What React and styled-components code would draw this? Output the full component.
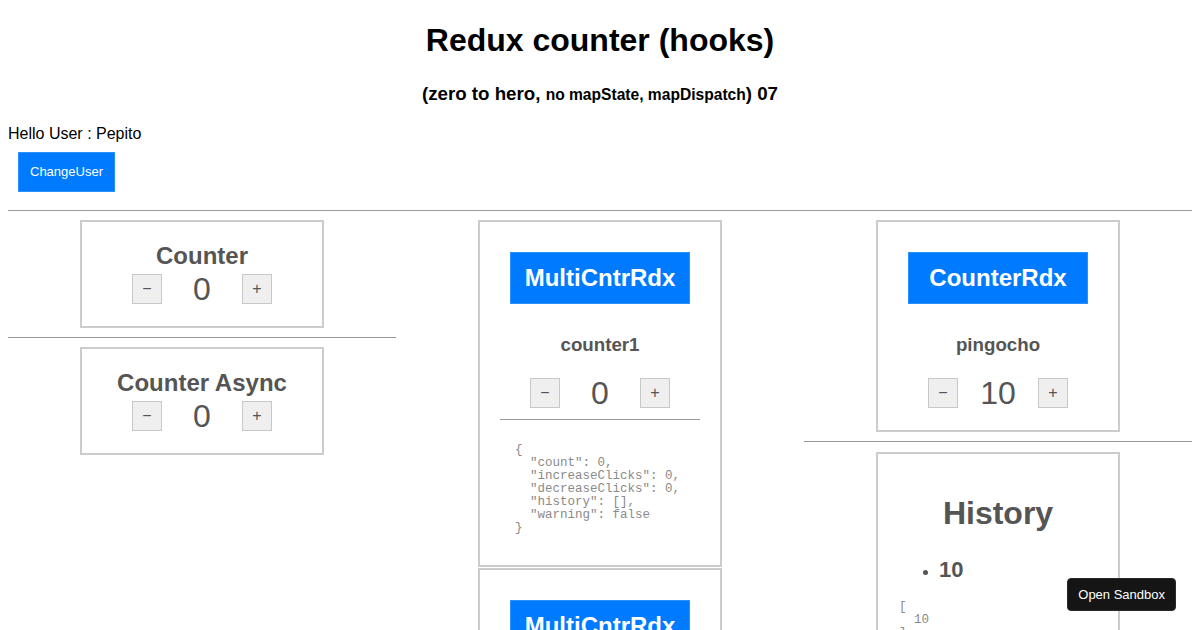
import React from 'react'
import styled, { createGlobalStyle } from 'styled-components'

const GlobalStyle = createGlobalStyle`
  body {
    margin: 8px;
    background: #fff;
    color: #000;
    font-family: "Liberation Sans", Arial, sans-serif;
  }
`

const Header = styled.header`
  text-align: center;
`

const Title = styled.h1`
  margin: 14px 0 0;
  font-size: 32px;
  font-weight: 700;
  line-height: 37px;
`

const Subtitle = styled.h3`
  margin: 24px 0 0;
  font-size: 18.72px;
  font-weight: 700;
  line-height: normal;
  small {
    font-size: 15.6px;
  }
`

const Greeting = styled.div`
  margin-top: 20px;
  font-size: 16px;
  line-height: normal;
`

const BlueButton = styled.button`
  display: block;
  box-sizing: border-box;
  background: #007bff;
  color: #fff;
  border: 1px solid #2b8fff;
  font-family: "Liberation Sans", Arial, sans-serif;
  cursor: pointer;
  ${({ $size }) =>
    $size === 'lg'
      ? `
    width: 180px;
    margin: 10px auto 0;
    padding: 11px 0;
    font-size: 24px;
    font-weight: 700;
    line-height: 27.6px;
  `
      : `
    margin: 9px 0 0 10px;
    padding: 11px 11px;
    font-size: 13px;
    line-height: 15.5px;
  `}
`

const Rule = styled.hr`
  height: 0;
  margin: ${({ $top }) => ($top ? `${$top}px` : '0')} 0 0;
  border: none;
  border-top: 1px solid #9a9a9a;
`

const Columns = styled.div`
  display: grid;
  grid-template-columns: repeat(3, 1fr);
  column-gap: 10px;
  align-items: start;
`

const Column = styled.div`
  display: flex;
  flex-direction: column;
`

const Card = styled.div`
  width: 200px;
  margin: ${({ $top = 9 }) => $top}px auto ${({ $stacked }) => ($stacked ? '1px' : '9px')};
  padding: 20px 20px 22px;
  border: 2px solid #ccc;
  color: #555;
  text-align: center;
  & + & {
    margin-top: 0;
  }
`

const CardTitle = styled.div`
  font-size: 24px;
  font-weight: 700;
  line-height: 28px;
`

const Name = styled.div`
  margin-top: 30px;
  font-size: 18.72px;
  font-weight: 700;
  line-height: 21px;
`

const Stepper = styled.div`
  display: flex;
  align-items: center;
  justify-content: center;
  height: 30px;
  margin-top: ${({ $top }) => $top}px;
`

const StepButton = styled.button`
  width: 30px;
  height: 30px;
  padding: 0;
  background: #efefef;
  border: 1px solid #c8c8c8;
  color: #555;
  font-family: "Liberation Sans", Arial, sans-serif;
  font-size: 16px;
  line-height: 28px;
  cursor: pointer;
`

const Value = styled.span`
  width: 80px;
  font-size: 32px;
  line-height: 30px;
  color: #555;
`

const InnerRule = styled.hr`
  height: 0;
  margin: 11px 0 0;
  border: none;
  border-top: 1px solid #9a9a9a;
`

const Json = styled.pre`
  margin: ${({ $m }) => $m};
  font-family: "Liberation Mono", "Courier New", monospace;
  font-size: 12.5px;
  line-height: 13px;
  color: #8a8a8a;
  text-align: left;
  white-space: pre;
`

const HistoryTitle = styled.h1`
  margin: 21px 0 0;
  font-size: 32px;
  font-weight: 700;
  line-height: 37px;
`

const HistoryList = styled.ul`
  margin: 25px 0 0;
  padding-left: 41px;
  text-align: left;
`

const HistoryItem = styled.li`
  font-size: 22px;
  font-weight: 700;
  line-height: 25px;
  &::marker {
    font-size: 16px;
  }
`

const SandboxLink = styled.a`
  position: fixed;
  right: 24px;
  bottom: 19px;
  padding: 8px 10px;
  background: #151515;
  border: 1px solid #2a2a2a;
  border-radius: 4px;
  color: #fff;
  font-family: "Liberation Sans", Arial, sans-serif;
  font-size: 13px;
  line-height: 15px;
  text-decoration: none;
`

const multiState = `{
  "count": 0,
  "increaseClicks": 0,
  "decreaseClicks": 0,
  "history": [],
  "warning": false
}`

const Counter = ({ title, value }) => (
  <Card>
    <CardTitle>{title}</CardTitle>
    <Stepper $top={4}>
      <StepButton>−</StepButton>
      <Value>{value}</Value>
      <StepButton>+</StepButton>
    </Stepper>
  </Card>
)

const ReduxCounter = ({ label, name, value, state, stacked }) => (
  <Card $stacked={stacked}>
    <BlueButton $size="lg">{label}</BlueButton>
    <Name>{name}</Name>
    <Stepper $top={23.5}>
      <StepButton>−</StepButton>
      <Value>{value}</Value>
      <StepButton>+</StepButton>
    </Stepper>
    {state && (
      <>
        <InnerRule />
        <Json $m="24px 0 8px 15px">{state}</Json>
      </>
    )}
  </Card>
)

const App = () => (
  <>
    <GlobalStyle />
    <Header>
      <Title>Redux counter (hooks)</Title>
      <Subtitle>
        (zero to hero, <small>no mapState, mapDispatch</small>) 07
      </Subtitle>
    </Header>
    <Greeting>Hello User : Pepito</Greeting>
    <BlueButton>ChangeUser</BlueButton>
    <Rule $top={18.5} />
    <Columns>
      <Column>
        <Counter title="Counter" value={0} />
        <Rule />
        <Counter title="Counter Async" value={0} />
      </Column>
      <Column>
        <ReduxCounter stacked label="MultiCntrRdx" name="counter1" value={0} state={multiState} />
        <ReduxCounter stacked label="MultiCntrRdx" name="counter2" value={0} state={multiState} />
      </Column>
      <Column>
        <ReduxCounter label="CounterRdx" name="pingocho" value={10} />
        <Rule />
        <Card $top={10}>
          <HistoryTitle>History</HistoryTitle>
          <HistoryList>
            <HistoryItem>10</HistoryItem>
          </HistoryList>
          <Json $m="19px 0 0 1px">{`[\n  10\n]`}</Json>
        </Card>
      </Column>
    </Columns>
    <SandboxLink href="#">Open Sandbox</SandboxLink>
  </>
)

export default App
